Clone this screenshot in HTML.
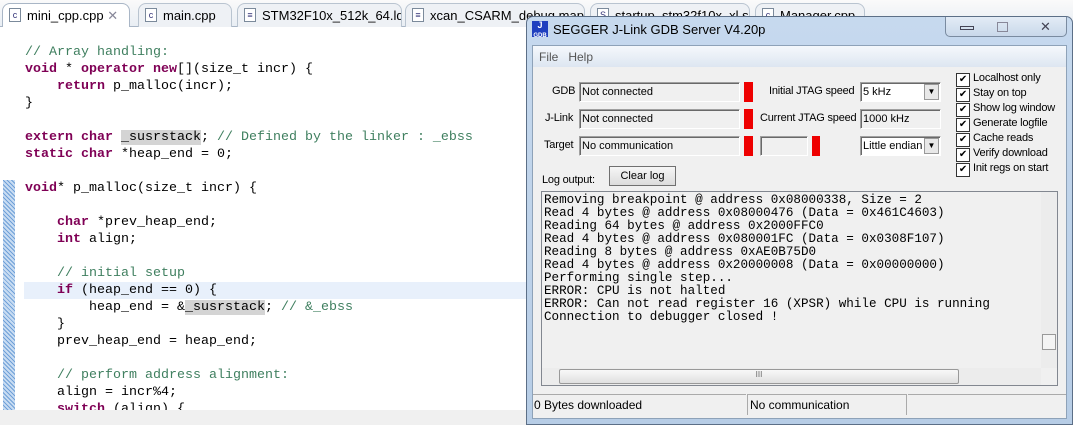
<!DOCTYPE html>
<html><head><style>
*{margin:0;padding:0;box-sizing:border-box}
body{width:1073px;height:425px;overflow:hidden;background:#fff;position:relative;font-family:"Liberation Sans",sans-serif}
.a{position:absolute}
.tabs{left:0;top:0;width:1073px;height:27px;background:linear-gradient(#fafafa,#e9eef4);border-bottom:1px solid #a9b6c6}
.tab{position:absolute;top:3px;height:24px;font-size:13px;color:#000;padding:4px 0 0 24px;border:1px solid #b9c4d0;border-bottom:none;border-radius:8px 8px 0 0;background:#eef1f5;overflow:hidden;white-space:nowrap}
.tab i{position:absolute;left:6px;top:4px;width:12px;height:14px;border:1px solid #7b8a9b;background:#fff;font-style:normal;font-size:9px;color:#337;text-align:center;line-height:12px}
.code{font-family:"Liberation Mono",monospace;font-size:13.33px;line-height:17px;white-space:pre;color:#000}
.k{color:#7f0055;font-weight:bold}
.c{color:#3f7f5f}
.h{background:#d4d4d4}
.log{font-family:"Liberation Mono",monospace;font-size:12.6px;line-height:13px;white-space:pre;color:#000}
.lbl{font-size:11px;color:#000;letter-spacing:-0.2px}
.fld{position:absolute;height:20px;border:1px solid #a0a0a0;border-right-color:#fff;border-bottom-color:#fff;background:#f0f0f0;font-size:11px;padding:3px 2px;box-shadow:inset 1px 1px 0 #696969;white-space:nowrap;overflow:hidden}
.red{position:absolute;width:9px;height:20px;background:#e00}
.cb{position:absolute;left:956px;font-size:11px;padding-left:17px;letter-spacing:-0.2px}
.cb:before{content:"✔";position:absolute;left:0;top:1px;width:12px;height:12px;border:1px solid #333;background:#fff;font-size:10px;line-height:11px;text-align:center}
.dd{position:absolute;right:1px;top:1px;width:15px;height:16px;background:#e8e8e8;border:1px solid #999;font-size:8px;text-align:center;line-height:14px}
</style></head><body>
<div class="a tabs"></div>
<div class="tab" style="left:2px;width:128px;background:#fff;border-color:#a9b6c6">mini_cpp.cpp <span style="color:#889">✕</span><i>c</i></div>
<div class="tab" style="left:138px;width:94px">main.cpp<i>c</i></div>
<div class="tab" style="left:237px;width:165px">STM32F10x_512k_64.ld<i>≡</i></div>
<div class="tab" style="left:405px;width:180px">xcan_CSARM_debug.map<i>≡</i></div>
<div class="tab" style="left:590px;width:160px">startup_stm32f10x_xl.s<i>S</i></div>
<div class="tab" style="left:755px;width:110px">Manager.cpp<i>c</i></div>

<div class="a" style="left:3px;top:180px;width:12px;height:230px;background:repeating-linear-gradient(45deg,#6fa0d8 0 1px,#c8dcf2 1px 3px)"></div>
<div class="a" style="left:24px;top:282px;width:505px;height:17px;background:#e8f0fb"></div>
<div class="a code" style="left:25px;top:44px"><span class="c">// Array handling:</span>
<span class="k">void</span> * <span class="k">operator</span> <span class="k">new</span>[](size_t incr) {
    <span class="k">return</span> p_malloc(incr);
}

<span class="k">extern</span> <span class="k">char</span> <span class="h">_susrstack</span>; <span class="c">// Defined by the linker : _ebss</span>
<span class="k">static</span> <span class="k">char</span> *heap_end = 0;

<span class="k">void</span>* p_malloc(size_t incr) {

    <span class="k">char</span> *prev_heap_end;
    <span class="k">int</span> align;

    <span class="c">// initial setup</span>
    <span class="k">if</span> (heap_end == 0) {
        heap_end = &amp;<span class="h">_susrstack</span>; <span class="c">// &amp;_ebss</span>
    }
    prev_heap_end = heap_end;

    <span class="c">// perform address alignment:</span>
    align = incr%4;
    <span class="k">switch</span> (align) {</div>
<div class="a" style="left:0;top:410px;width:530px;height:15px;background:#f0f0f0"></div>

<!-- dialog -->
<div class="a" style="left:526px;top:16px;width:547px;height:409px;background:linear-gradient(#c6d9ee,#b7cde6);border:1px solid #5c6f87;border-radius:7px 7px 0 0"></div>
<div class="a" style="left:532px;top:21px;width:16px;height:16px;background:#1f3fbf;color:#fff;font-size:9px;font-weight:bold;text-align:center;line-height:9px">J<br><span style="font-size:6px">GDB</span></div>
<div class="a" style="left:553px;top:22px;font-size:13px">SEGGER J-Link GDB Server V4.20p</div>
<div class="a" style="left:945px;top:17px;width:122px;height:20px;border:1px solid #7a8ba0;border-top:none;border-radius:0 0 5px 5px;background:linear-gradient(#e3ecf6,#c9d8ea)"></div>
<div class="a" style="left:960px;top:26px;width:14px;height:4px;border:1px solid #445"></div>
<div class="a" style="left:997px;top:22px;width:11px;height:10px;border:1px solid #889"></div>
<div class="a" style="left:1040px;top:19px;font-size:13px;color:#445">✕</div>
<div class="a" style="left:532px;top:45px;width:535px;height:374px;background:#f0f0f0;border:1px solid #8ea2b8"></div>
<div class="a" style="left:533px;top:46px;width:533px;height:21px;background:linear-gradient(#f5f8fc,#dde6f1)"></div>
<div class="a" style="left:539px;top:50px;font-size:12px;color:#555">File&nbsp;&nbsp;&nbsp;Help</div>

<div class="a lbl" style="left:552px;top:85px">GDB</div>
<div class="a lbl" style="left:545px;top:112px">J-Link</div>
<div class="a lbl" style="left:544px;top:139px">Target</div>
<div class="fld" style="left:579px;top:82px;width:161px">Not connected</div>
<div class="fld" style="left:579px;top:109px;width:161px">Not connected</div>
<div class="fld" style="left:579px;top:136px;width:161px">No communication</div>
<div class="red" style="left:744px;top:82px"></div>
<div class="red" style="left:744px;top:109px"></div>
<div class="red" style="left:744px;top:136px"></div>
<div class="fld" style="left:760px;top:136px;width:48px"></div>
<div class="red" style="left:812px;top:136px;width:8px"></div>
<div class="a lbl" style="left:769px;top:85px">Initial JTAG speed</div>
<div class="a lbl" style="left:760px;top:112px">Current JTAG speed</div>
<div class="fld" style="left:860px;top:82px;width:81px;background:#fff">5 kHz<span class="dd">▼</span></div>
<div class="fld" style="left:860px;top:109px;width:81px">1000 kHz</div>
<div class="fld" style="left:860px;top:136px;width:81px;background:#fff">Little endian<span class="dd">▼</span></div>
<div class="cb" style="top:72px">Localhost only</div>
<div class="cb" style="top:87px">Stay on top</div>
<div class="cb" style="top:102px">Show log window</div>
<div class="cb" style="top:117px">Generate logfile</div>
<div class="cb" style="top:132px">Cache reads</div>
<div class="cb" style="top:147px">Verify download</div>
<div class="cb" style="top:162px">Init regs on start</div>
<div class="a lbl" style="left:542px;top:174px">Log output:</div>
<div class="a" style="left:609px;top:166px;width:67px;height:20px;border:1px solid #707070;background:linear-gradient(#f6f6f6,#dcdcdc);font-size:11px;text-align:center;line-height:18px">Clear log</div>

<div class="a" style="left:541px;top:191px;width:517px;height:195px;border:1px solid #828790;background:#f0f0f0"></div>
<div class="a log" style="left:544px;top:194px">Removing breakpoint @ address 0x08000338, Size = 2
Read 4 bytes @ address 0x08000476 (Data = 0x461C4603)
Reading 64 bytes @ address 0x2000FFC0
Read 4 bytes @ address 0x080001FC (Data = 0x0308F107)
Reading 8 bytes @ address 0xAE0B75D0
Read 4 bytes @ address 0x20000008 (Data = 0x00000000)
Performing single step...
ERROR: CPU is not halted
ERROR: Can not read register 16 (XPSR) while CPU is running
Connection to debugger closed !</div>
<div class="a" style="left:1041px;top:192px;width:16px;height:176px;background:#ececec"></div>
<div class="a" style="left:1042px;top:334px;width:14px;height:16px;border:1px solid #999;background:#f4f4f4"></div>
<div class="a" style="left:542px;top:368px;width:499px;height:17px;background:#ececec"></div>
<div class="a" style="left:559px;top:369px;width:400px;height:15px;border:1px solid #999;border-radius:2px;background:linear-gradient(#f8f8f8,#e0e0e0);font-size:8px;text-align:center;color:#666">III</div>
<div class="a" style="left:533px;top:394px;width:213px;height:21px;border-top:1px solid #aaa;font-size:12px;padding:3px 1px">0 Bytes downloaded</div>
<div class="a" style="left:747px;top:394px;width:160px;height:21px;border:1px solid #aaa;border-bottom:none;font-size:12px;padding:3px 2px">No communication</div>
<div class="a" style="left:908px;top:394px;width:158px;height:21px;border-top:1px solid #aaa"></div>
</body></html>
